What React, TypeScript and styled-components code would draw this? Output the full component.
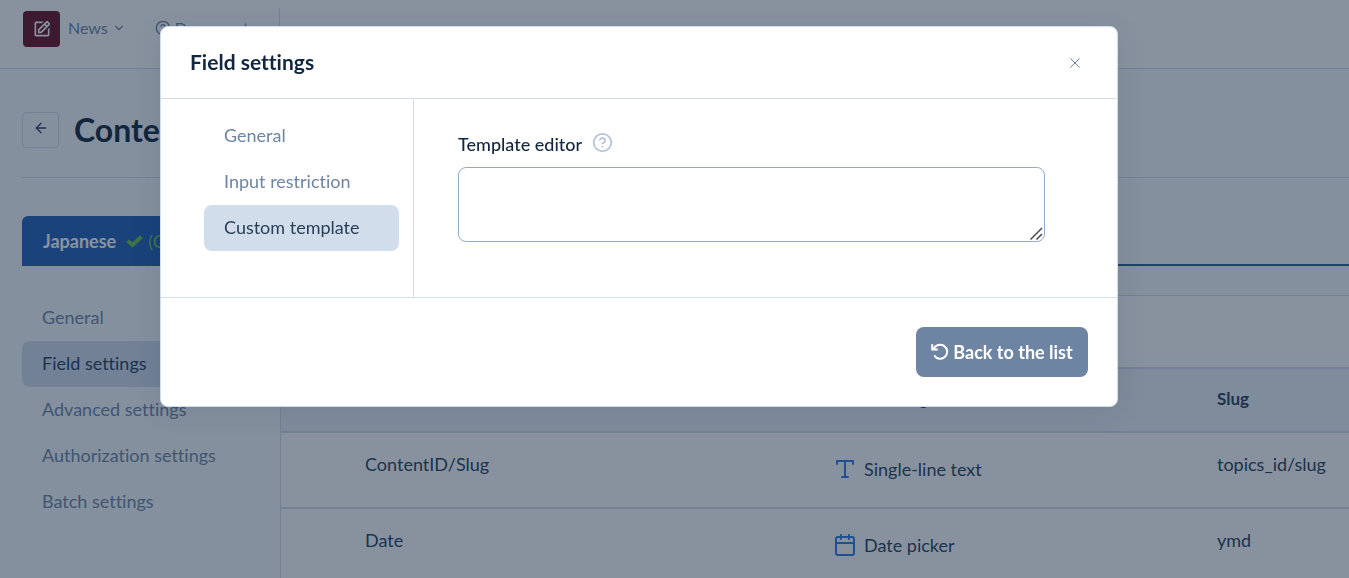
import React from "react";
import styled, { createGlobalStyle, css } from "styled-components";
import { FiArrowLeft, FiCalendar, FiChevronDown, FiHelpCircle, FiType } from "react-icons/fi";
import { BiEdit } from "react-icons/bi";

const color = {
  ink: "#12263f",
  text: "#283e59",
  muted: "#6e84a3",
  line: "#d2ddec",
  field: "#95aac9",
  hint: "#b1c2d9",
  primary: "#225eb7",
};

const GlobalStyle = createGlobalStyle`
  *, *::before, *::after { box-sizing: border-box; }
  body {
    margin: 0;
    background: #f9fbfd;
    color: ${color.text};
    font-family: Lato, "Liberation Sans", sans-serif;
    font-size: 18px;
    font-variant-ligatures: none;
    line-height: 26px;
  }
  button, textarea { font: inherit; font-variant-ligatures: none; }
  a { color: inherit; text-decoration: none; }
  h1, h2, p, ul { margin: 0; padding: 0; }
`;

const Page = styled.div`
  height: 100vh;
  overflow: hidden;
`;

const TopBar = styled.header`
  display: flex;
  align-items: flex-start;
  height: 69px;
  padding: 8px 22px 0;
  background: #fff;
  border-bottom: 1px solid ${color.line};
`;

const TopNav = styled.nav`
  display: flex;
  align-items: center;
  width: 258px;
  height: 40px;
  color: ${color.muted};
  font-size: 16px;
  border-right: 1px solid ${color.line};
`;

const Logo = styled.span`
  display: grid;
  flex: none;
  place-items: center;
  width: 37px;
  height: 36px;
  margin: 2px 8px 0 1px;
  border-radius: 4px;
  background: #680e21;
  color: #fff;
`;

const TopLink = styled.a`
  display: flex;
  align-items: center;
  gap: 4px;
  margin-right: 29px;
`;

const Main = styled.main`
  padding-left: 22px;
`;

const TitleRow = styled.div`
  display: flex;
  align-items: center;
  gap: 15px;
  height: 109px;
  padding-top: 14px;
  border-bottom: 1px solid ${color.line};
`;

const BackLink = styled.a`
  display: grid;
  place-items: center;
  width: 37px;
  height: 36px;
  padding-bottom: 4px;
  border: 1px solid ${color.line};
  border-radius: 4px;
  color: ${color.text};
`;

const PageTitle = styled.h1`
  color: ${color.ink};
  font-size: 32px;
  line-height: 40px;
`;

const LanguageTabs = styled.div`
  display: flex;
  margin-top: 38px;
  border-bottom: 2px solid ${color.primary};
`;

const LanguageTab = styled.button`
  display: flex;
  align-items: center;
  gap: 10px;
  height: 48px;
  padding: 2px 21px 0;
  border: 0;
  border-radius: 6px 6px 0 0;
  background: ${color.primary};
  color: #fff;
  font-weight: 700;
`;

const Current = styled.span`
  display: flex;
  align-items: center;
  gap: 5px;
  color: #6ec04c;
  font-weight: 400;
`;

const Columns = styled.div`
  display: flex;
  align-items: stretch;
  margin-top: 29px;
`;

const NavList = styled.ul<{ $side?: boolean }>`
  flex: none;
  list-style: none;
  ${(p) =>
    p.$side
      ? css`
          width: 258px;
          padding-right: 14px;
        `
      : css`
          width: 253px;
          padding: 14px 14px 46px 43px;
          border-right: 1px solid ${color.line};
        `}
`;

const NavItem = styled.a<{ $active?: boolean }>`
  display: block;
  padding: 9px 20px 11px;
  border-radius: 8px;
  color: ${(p) => (p.$active ? color.text : color.muted)};
  background: ${(p) => (p.$active ? color.line : "transparent")};
`;

const Card = styled.section`
  flex: 1;
  min-width: 0;
  border-top: 1px solid ${color.line};
  border-left: 1px solid ${color.line};
  background: #fff;
  padding-top: 71px;
`;

const Table = styled.table`
  width: 100%;
  table-layout: fixed;
  border-collapse: separate;
  border-spacing: 0;
`;

const HeadCell = styled.th<{ $width?: number }>`
  width: ${(p) => (p.$width ? `${p.$width}px` : "auto")};
  height: 66px;
  padding: 0 0 2px;
  border: solid ${color.line};
  border-width: 2px 0;
  background: #edf2f9;
  font-size: 17px;
  line-height: 24px;
  text-align: left;
`;

const Cell = styled.td`
  height: 76px;
  padding: 18px 0 0;
  border-bottom: 2px solid ${color.line};
  vertical-align: top;
  white-space: nowrap;
`;

const FieldType = styled.span`
  display: flex;
  align-items: center;
  gap: 7px;
  padding-top: 5px;
  margin-left: -2px;

  svg {
    flex: none;
    color: #2c7be5;
  }
`;

const Backdrop = styled.div`
  position: fixed;
  inset: 0;
  padding: 26px 231px 26px 160px;
  overflow: auto;
  background: rgba(18, 38, 63, 0.5);
`;

const Modal = styled.section`
  border: 1px solid ${color.line};
  border-radius: 8px;
  background: #fff;
  box-shadow: 0 5px 30px rgba(18, 38, 63, 0.1);
`;

const ModalHeader = styled.header`
  display: flex;
  align-items: center;
  justify-content: space-between;
  height: 72px;
  padding: 0 30px 0 29px;
  border-bottom: 1px solid ${color.line};
`;

const ModalTitle = styled.h2`
  padding-bottom: 2px;
  color: ${color.ink};
  font-size: 21px;
  line-height: 28px;
`;

const CloseButton = styled.button`
  display: grid;
  place-items: center;
  width: 24px;
  height: 24px;
  padding: 0;
  border: 0;
  background: none;
  color: ${color.muted};
`;

const ModalBody = styled.div`
  display: flex;
  border-bottom: 1px solid ${color.line};
`;

const Editor = styled.div`
  flex: 1;
  padding: 30px 72px 0 44px;
`;

const LabelRow = styled.div`
  display: flex;
  align-items: center;
  gap: 10px;
  height: 30px;
  margin-bottom: 8px;
`;

const Label = styled.label`
  color: ${color.ink};
  font-weight: 500;
`;

const HintButton = styled.button`
  display: flex;
  padding: 0 0 3px;
  border: 0;
  background: none;
  color: ${color.hint};
`;

const TextAreaFrame = styled.div`
  position: relative;

  svg {
    position: absolute;
    right: 2px;
    bottom: 2px;
    pointer-events: none;
  }
`;

const TextArea = styled.textarea`
  display: block;
  width: 100%;
  height: 75px;
  padding: 10px 14px;
  border: 1px solid ${color.field};
  border-radius: 8px;
  background: #fff;
  resize: vertical;

  &::-webkit-resizer {
    background: transparent;
  }
`;

const ModalFooter = styled.footer`
  display: flex;
  justify-content: flex-end;
  padding: 29px;
`;

const ListButton = styled.button`
  display: flex;
  align-items: center;
  justify-content: center;
  gap: 4px;
  min-width: 172px;
  height: 50px;
  padding: 0 14px;
  border: 0;
  border-radius: 8px;
  background: ${color.muted};
  color: #fff;
  font-weight: 700;
`;

const CloseIcon = () => (
  <svg width="10" height="10" viewBox="0 0 10 10" fill="none" stroke="currentColor" aria-hidden="true">
    <path d="M0.5 0.5 9.5 9.5M9.5 0.5 0.5 9.5" />
  </svg>
);

const CheckIcon = () => (
  <svg width="17" height="13" viewBox="0 0 17 13" fill="none" stroke="currentColor" strokeWidth="4" aria-hidden="true">
    <path d="M1.6 5.6 6.4 10 15.4 1.6" />
  </svg>
);

const ReturnIcon = () => (
  <svg width="18" height="18" viewBox="0 0 18 18" fill="none" stroke="currentColor" strokeWidth="2" aria-hidden="true">
    <path d="M2.6 6.2A7 7 0 1 1 3.2 12.4M1.2 1.2V6.6H6.8" />
  </svg>
);

const GripIcon = () => (
  <svg width="13" height="13" viewBox="0 0 13 13" fill="none" stroke="#4a4a4a" strokeWidth="1.5" aria-hidden="true">
    <path d="M0.5 12.5 12 1M6.5 12.5 12 7" />
  </svg>
);

const sideItems = ["General", "Field settings", "Advanced settings", "Authorization settings", "Batch settings"];
const modalItems = ["General", "Input restriction", "Custom template"];
const fields = [
  { name: "ContentID/Slug", type: "Single-line text", slug: "topics_id/slug", Icon: FiType },
  { name: "Date", type: "Date picker", slug: "ymd", Icon: FiCalendar },
];

export default function App() {
  return (
    <>
      <GlobalStyle />
      <Page>
        <TopBar>
          <TopNav>
            <Logo><BiEdit size={20} /></Logo>
            <TopLink href="#news">News <FiChevronDown size={14} /></TopLink>
            <TopLink href="#document"><FiHelpCircle size={16} /> Document</TopLink>
          </TopNav>
        </TopBar>
        <Main>
          <TitleRow>
            <BackLink href="#back" aria-label="Back"><FiArrowLeft size={16} /></BackLink>
            <PageTitle>Content</PageTitle>
          </TitleRow>
          <LanguageTabs>
            <LanguageTab>
              Japanese <Current><CheckIcon /> (Current)</Current>
            </LanguageTab>
          </LanguageTabs>
          <Columns>
            <NavList $side>
              {sideItems.map((item) => (
                <li key={item}><NavItem href="#" $active={item === "Field settings"}>{item}</NavItem></li>
              ))}
            </NavList>
            <Card>
              <Table>
                <thead>
                  <tr>
                    <HeadCell $width={84} aria-label="Order" />
                    <HeadCell $width={470}>Name</HeadCell>
                    <HeadCell $width={382}>Field setting</HeadCell>
                    <HeadCell>Slug</HeadCell>
                  </tr>
                </thead>
                <tbody>
                  {fields.map(({ name, type, slug, Icon }) => (
                    <tr key={name}>
                      <Cell />
                      <Cell>{name}</Cell>
                      <Cell><FieldType><Icon size={24} />{type}</FieldType></Cell>
                      <Cell>{slug}</Cell>
                    </tr>
                  ))}
                </tbody>
              </Table>
            </Card>
          </Columns>
        </Main>
      </Page>
      <Backdrop>
        <Modal role="dialog" aria-modal="true" aria-labelledby="modal-title">
          <ModalHeader>
            <ModalTitle id="modal-title">Field settings</ModalTitle>
            <CloseButton aria-label="Close"><CloseIcon /></CloseButton>
          </ModalHeader>
          <ModalBody>
            <NavList>
              {modalItems.map((item) => (
                <li key={item}><NavItem href="#" $active={item === "Custom template"}>{item}</NavItem></li>
              ))}
            </NavList>
            <Editor>
              <LabelRow>
                <Label htmlFor="template">Template editor</Label>
                <HintButton aria-label="Help"><FiHelpCircle size={21} /></HintButton>
              </LabelRow>
              <TextAreaFrame>
                <TextArea id="template" />
                <GripIcon />
              </TextAreaFrame>
            </Editor>
          </ModalBody>
          <ModalFooter>
            <ListButton><ReturnIcon /> Back to the list</ListButton>
          </ModalFooter>
        </Modal>
      </Backdrop>
    </>
  );
}
